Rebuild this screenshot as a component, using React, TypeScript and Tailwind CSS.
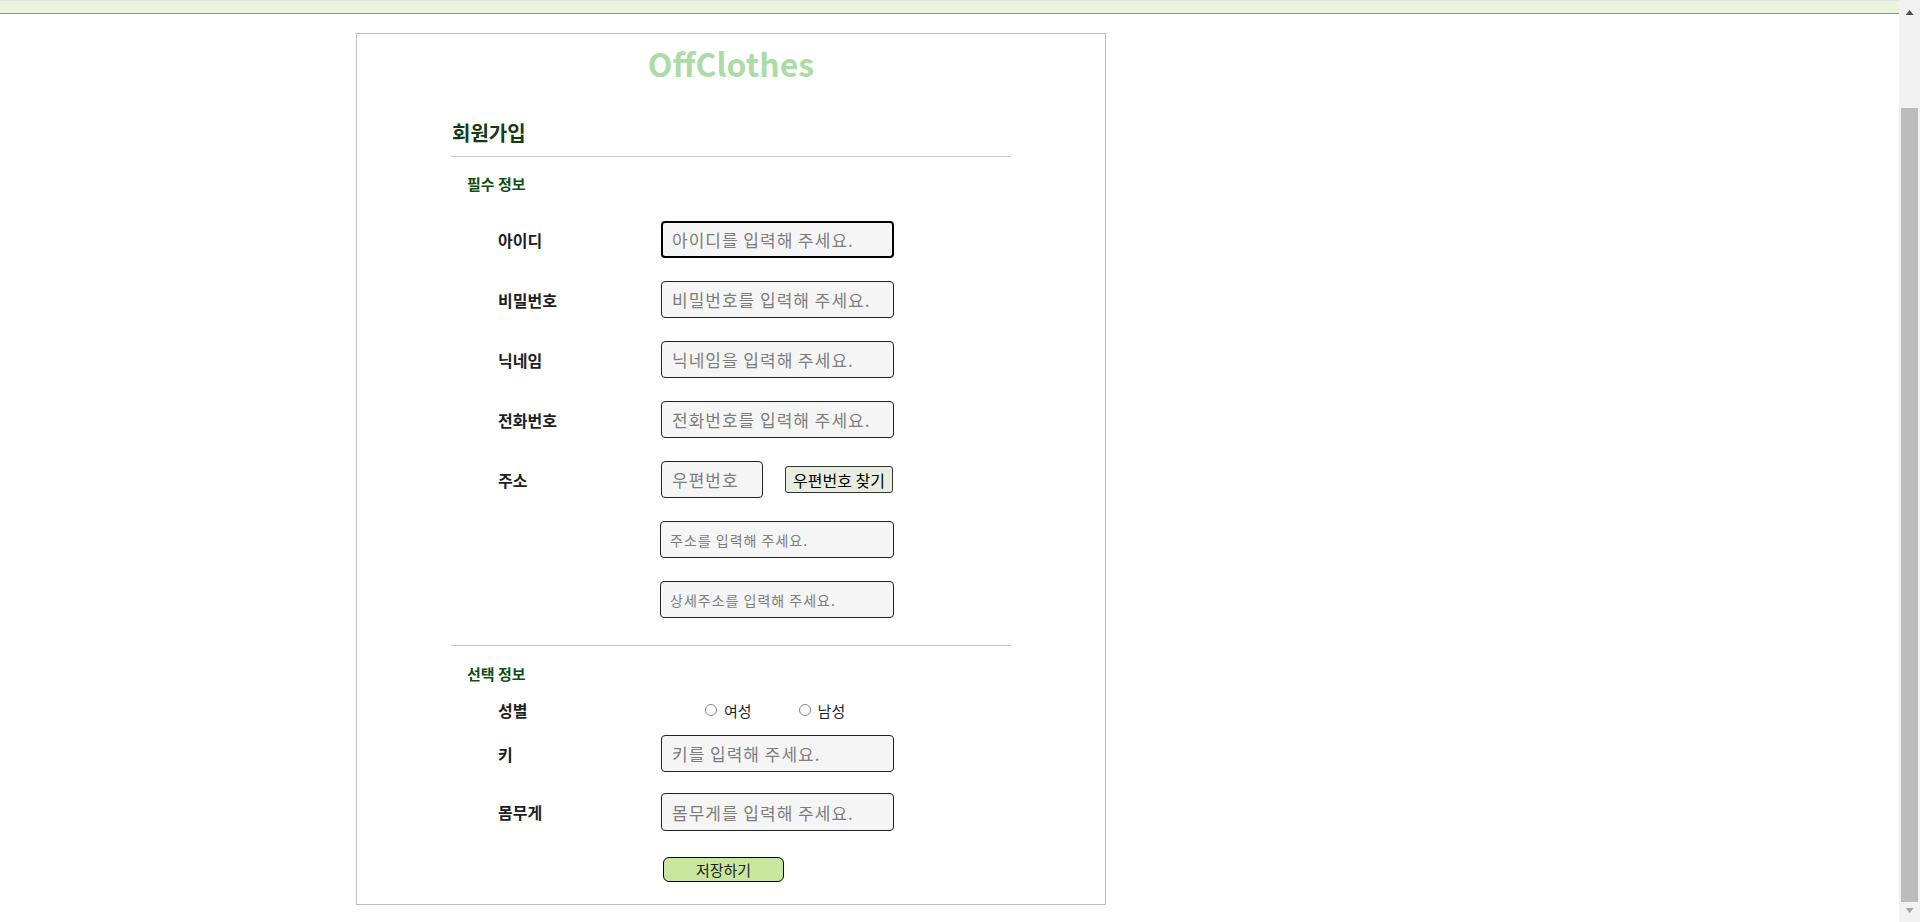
import type { ReactNode } from 'react'

// ── shared class strings ────────────────────────
const FONT = "font-['Noto_Sans_CJK_KR','Noto_Sans',sans-serif]"
const INPUT_BASE =
  'block rounded-[4px] border-[#222] bg-[#f5f5f5] text-[#222] outline-none placeholder:text-[#7d7d7d]'
const INPUT = `${INPUT_BASE} w-[233px] h-[37px] border pl-[10px] text-[17px] tracking-[1px]`
const INPUT_SMALL = `${INPUT_BASE} -ml-px w-[234px] h-[37px] border pl-[9px] text-[14px] tracking-[1px]`

function Row({ label, children, className = '' }: { label?: string; children: ReactNode; className?: string }) {
  return (
    <div className={`flex items-center ${className}`}>
      <div className="w-[210px] shrink-0 pl-[47px] text-[16px] leading-none font-semibold text-[#1e1e1e]">
        {label}
      </div>
      <div className="flex items-center">{children}</div>
    </div>
  )
}

function Radio({ label }: { label: string }) {
  return (
    <label className="flex items-center">
      <span className="inline-block w-[12px] h-[12px] rounded-full border border-[#858585] bg-white" />
      <span className="ml-[7px] text-[15px] leading-none text-[#1e1e1e]">{label}</span>
    </label>
  )
}

function Scrollbar() {
  return (
    <div className="w-[21px] shrink-0 h-full flex flex-col bg-[#f1f1f1]">
      <div className="h-[21px] shrink-0">
        <svg width="21" height="21" viewBox="0 0 21 21">
          <polygon points="10.6,10 14.6,15 6.6,15" fill="#505050" />
        </svg>
      </div>
      <div className="flex-1 px-[2px]">
        <div className="mt-[87px] h-[794px] bg-[#bcbcbc]" />
      </div>
      <div className="h-[17px] shrink-0">
        <svg width="21" height="17" viewBox="0 0 21 17">
          <polygon points="6.6,3 14.6,3 10.6,8" fill="#a3a3a3" />
        </svg>
      </div>
    </div>
  )
}

export default function App() {
  return (
    <div className={`${FONT} bg-white h-[922px] overflow-hidden flex`}>
      <div className="flex-1 min-w-0 flex flex-col">
        {/* ── Top bar ── */}
        <div className="h-[14px] shrink-0 bg-[#eaf3dc] border-t border-t-[#e3e3e3] border-b border-b-[#7d9b75]" />

        <div className="pt-[19px]">
          <div className="ml-[356px] w-[750px] border border-[#bdbdbd] pl-[94px] pb-[22px]">
            {/* ── Logo ── */}
            <h1 className="mt-[13px] -ml-[94px] text-center text-[32px] leading-none font-bold text-[#acdca6]">
              OffClothes
            </h1>

            <div className="w-[560px]">
              {/* ── Heading ── */}
              <h2 className="mt-[44px] pl-[1px] text-[20px] leading-none font-bold text-[#163a16]">회원가입</h2>
              <div className="mt-[13px] h-px bg-[#c8c8c8]" />

              {/* ── Required ── */}
              <h3 className="mt-[19px] pl-[16px] text-[15px] leading-none font-semibold text-[#0f4f12]">필수 정보</h3>

              <div className="mt-[30px] flex flex-col gap-[23px]">
                <Row label="아이디">
                  <input
                    className={`${INPUT_BASE} w-[233px] h-[37px] border-2 border-black pl-[9px] text-[17px] tracking-[1px]`}
                    placeholder="아이디를 입력해 주세요."
                  />
                </Row>
                <Row label="비밀번호">
                  <input type="password" className={INPUT} placeholder="비밀번호를 입력해 주세요." />
                </Row>
                <Row label="닉네임">
                  <input className={INPUT} placeholder="닉네임을 입력해 주세요." />
                </Row>
                <Row label="전화번호">
                  <input className={INPUT} placeholder="전화번호를 입력해 주세요." />
                </Row>
                <Row label="주소">
                  <input
                    className={`${INPUT_BASE} w-[102px] h-[37px] border pl-[10px] text-[17px] tracking-[1px]`}
                    placeholder="우편번호"
                  />
                  <button className="ml-[22px] h-[27px] w-[108px] rounded-[3px] border border-[#333] bg-[#e7eddf] text-[16px] leading-none text-black">
                    우편번호 찾기
                  </button>
                </Row>
                <Row>
                  <input className={INPUT_SMALL} placeholder="주소를 입력해 주세요." />
                </Row>
                <Row>
                  <input className={INPUT_SMALL} placeholder="상세주소를 입력해 주세요." />
                </Row>
              </div>

              <div className="mt-[27px] h-px bg-[#c8c8c8]" />

              {/* ── Optional ── */}
              <h3 className="mt-[20px] pl-[16px] text-[15px] leading-none font-semibold text-[#0f4f12]">선택 정보</h3>

              <Row label="성별" className="mt-[19px] h-[20px]">
                <div className="ml-[44px] flex items-center gap-[47px]">
                  <Radio label="여성" />
                  <Radio label="남성" />
                </div>
              </Row>
              <Row label="키" className="mt-[15px]">
                <input className={INPUT} placeholder="키를 입력해 주세요." />
              </Row>
              <Row label="몸무게" className="mt-[21px]">
                <input
                  className={`${INPUT_BASE} w-[233px] h-[38px] border pl-[10px] text-[17px] tracking-[1px]`}
                  placeholder="몸무게를 입력해 주세요."
                />
              </Row>

              <div className="mt-[26px] pl-[212px]">
                <button className="h-[25px] w-[121px] rounded-[6px] border border-black bg-[#c9e69f] text-[15px] leading-none text-[#1e1e1e]">
                  저장하기
                </button>
              </div>
            </div>
          </div>
        </div>
      </div>

      <Scrollbar />
    </div>
  )
}
